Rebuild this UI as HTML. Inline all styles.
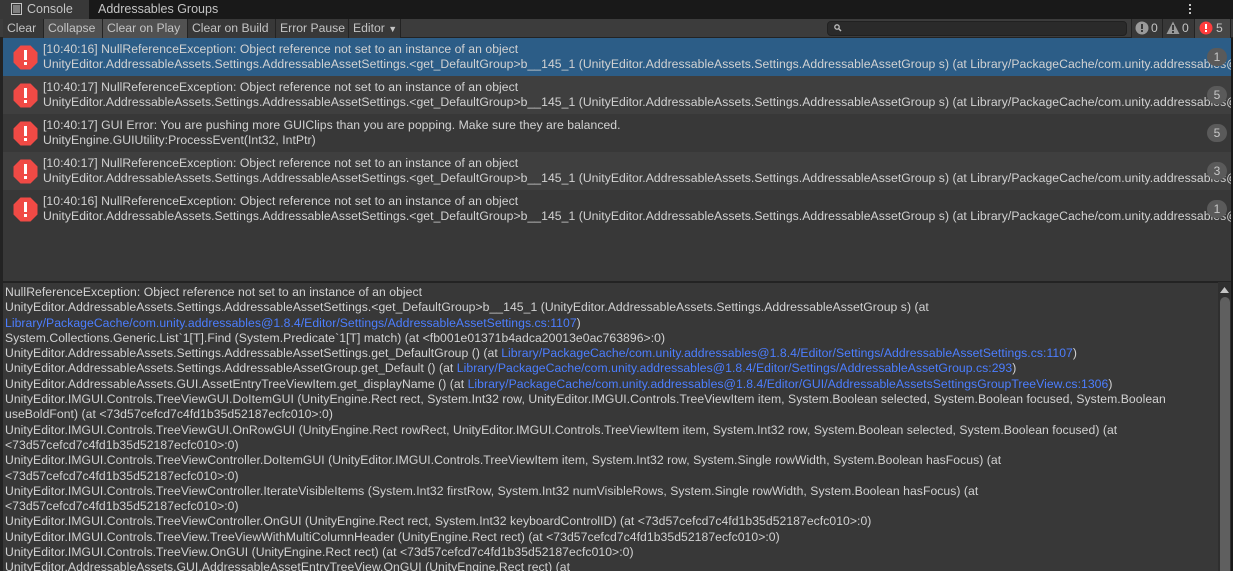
<!DOCTYPE html>
<html><head><style>
*{margin:0;padding:0;box-sizing:border-box}
body{width:1233px;height:571px;overflow:hidden;background:#383838;font-family:"Liberation Sans",sans-serif;font-size:12px;color:#d2d2d2;position:relative}
.abs{position:absolute}
#tabs{left:0;top:0;width:1233px;height:19px;background:#191919}
.tab{top:0;height:19px;line-height:19px;font-size:12.5px;color:#c4c4c4;white-space:nowrap}
#tb{left:0;top:19px;width:1233px;height:19px;background:#3c3c3c;border-bottom:1px solid #232323}
.btn{top:0;height:19px;line-height:18px;padding:0 4px;font-size:12.2px;color:#c4c4c4;border-right:1px solid #232323;background:#383838;white-space:nowrap;overflow:hidden}
.on{background:#515151}
.row{left:3px;width:1228px;height:38px;overflow:hidden;white-space:nowrap}
.row .t{position:absolute;left:40px;top:4px;line-height:15px;font-size:12.2px;letter-spacing:0.05px;color:#d2d2d2}
.row svg{position:absolute;left:10px;top:7px}
.badge{position:absolute;left:1204px;top:10px;width:20px;height:18px;border-radius:9px;background:#5a5a5a;color:#c8c8c8;text-align:center;line-height:18px;font-size:12px}
#det{left:3px;top:282px;width:1215px;height:289px;overflow:hidden;border-top:1px solid #232323}
#det div{white-space:nowrap;line-height:15.3px;font-size:12.2px;letter-spacing:0.05px;color:#d2d2d2}
#det .in{padding:2px 0 0 2px}
a{color:#4c7eff;text-decoration:none}
</style></head><body>
<div class="abs" style="left:0;top:0;width:3px;height:571px;background:#232323"></div>
<div class="abs" style="left:1231px;top:19px;width:2px;height:552px;background:#191919"></div>
<div id="tabs" class="abs">
 <div class="abs" style="left:0;top:0;width:89px;height:19px;background:#383838"></div>
 <svg class="abs" style="left:11px;top:3px" width="11" height="12" viewBox="0 0 11 12"><rect x="0.5" y="0.5" width="10" height="11" fill="none" stroke="#c4c4c4"/><path d="M2 3h7M2 5h7M2 7h7M2 9h7" stroke="#c4c4c4"/></svg>
 <div class="abs tab" style="left:27px">Console</div>
 <div class="abs tab" style="left:98px">Addressables Groups</div>
 <div class="abs" style="left:1189px;top:4px;width:2px;height:2px;background:#c4c4c4;box-shadow:0 4px #c4c4c4,0 8px #c4c4c4"></div>
</div>
<div id="tb" class="abs">
 <div class="abs btn" style="left:3px;width:41px">Clear</div>
 <div class="abs btn on" style="left:44px;width:59px">Collapse</div>
 <div class="abs btn on" style="left:103px;width:85px">Clear on Play</div>
 <div class="abs btn" style="left:188px;width:88px">Clear on Build</div>
 <div class="abs btn" style="left:276px;width:73px">Error Pause</div>
 <div class="abs btn" style="left:349px;width:52px">Editor <span style="font-size:9px">▼</span></div>
 <div class="abs" style="left:827px;top:2px;width:300px;height:15px;background:#2a2a2a;border:1px solid #212121;border-radius:4px"></div>
 <svg class="abs" style="left:834px;top:5px" width="8" height="8"><circle cx="3" cy="3" r="2.2" fill="none" stroke="#bbb" stroke-width="1.3"/><path d="M4.5 4.5L7 7" stroke="#bbb" stroke-width="1.5"/></svg>
 <div class="abs btn" style="left:1131px;width:32px;border-left:1px solid #232323"><svg width="14" height="14" style="position:absolute;left:3px;top:2px"><circle cx="7" cy="7" r="6.5" fill="#9a9a9a"/><rect x="6" y="3" width="2" height="5" fill="#383838"/><rect x="6" y="9" width="2" height="2" fill="#383838"/></svg><span style="position:absolute;left:19px">0</span></div>
 <div class="abs btn" style="left:1163px;width:32px"><svg width="14" height="14" style="position:absolute;left:3px;top:2px"><path d="M7 0.5L13.5 13H0.5Z" fill="#9a9a9a"/><rect x="6" y="4" width="2" height="5" fill="#383838"/><rect x="6" y="10" width="2" height="2" fill="#383838"/></svg><span style="position:absolute;left:19px">0</span></div>
 <div class="abs btn on" style="left:1195px;width:36px;background:#464646"><svg width="14" height="14" style="position:absolute;left:4px;top:2px"><circle cx="7" cy="7" r="6.5" fill="#ff3c3c"/><rect x="6" y="3" width="2" height="5" fill="#fff"/><rect x="6" y="9" width="2" height="2" fill="#fff"/></svg><span style="position:absolute;left:21px">5</span></div>
</div>

<div class="abs row" style="top:38px;background:#2c5d87"><svg width="25" height="25" viewBox="0 0 25 25"><path d="M7.5 0.5h10l7 7v10l-7 7h-10l-7-7v-10z" fill="#f04a45"/><rect x="11" y="5" width="3" height="10" fill="#fff"/><rect x="11" y="17" width="3" height="3" fill="#fff"/></svg><div class="t">[10:40:16] NullReferenceException: Object reference not set to an instance of an object<br>UnityEditor.AddressableAssets.Settings.AddressableAssetSettings.&lt;get_DefaultGroup&gt;b__145_1 (UnityEditor.AddressableAssets.Settings.AddressableAssetGroup s) (at Library/PackageCache/com.unity.addressables@1.8.4</div><div class="badge">1</div></div>
<div class="abs row" style="top:76px;background:#3f3f3f"><svg width="25" height="25" viewBox="0 0 25 25"><path d="M7.5 0.5h10l7 7v10l-7 7h-10l-7-7v-10z" fill="#f04a45"/><rect x="11" y="5" width="3" height="10" fill="#fff"/><rect x="11" y="17" width="3" height="3" fill="#fff"/></svg><div class="t">[10:40:17] NullReferenceException: Object reference not set to an instance of an object<br>UnityEditor.AddressableAssets.Settings.AddressableAssetSettings.&lt;get_DefaultGroup&gt;b__145_1 (UnityEditor.AddressableAssets.Settings.AddressableAssetGroup s) (at Library/PackageCache/com.unity.addressables@1.8.4</div><div class="badge">5</div></div>
<div class="abs row" style="top:114px;background:#383838"><svg width="25" height="25" viewBox="0 0 25 25"><path d="M7.5 0.5h10l7 7v10l-7 7h-10l-7-7v-10z" fill="#f04a45"/><rect x="11" y="5" width="3" height="10" fill="#fff"/><rect x="11" y="17" width="3" height="3" fill="#fff"/></svg><div class="t">[10:40:17] GUI Error: You are pushing more GUIClips than you are popping. Make sure they are balanced.<br>UnityEngine.GUIUtility:ProcessEvent(Int32, IntPtr)</div><div class="badge">5</div></div>
<div class="abs row" style="top:152px;background:#3f3f3f"><svg width="25" height="25" viewBox="0 0 25 25"><path d="M7.5 0.5h10l7 7v10l-7 7h-10l-7-7v-10z" fill="#f04a45"/><rect x="11" y="5" width="3" height="10" fill="#fff"/><rect x="11" y="17" width="3" height="3" fill="#fff"/></svg><div class="t">[10:40:17] NullReferenceException: Object reference not set to an instance of an object<br>UnityEditor.AddressableAssets.Settings.AddressableAssetSettings.&lt;get_DefaultGroup&gt;b__145_1 (UnityEditor.AddressableAssets.Settings.AddressableAssetGroup s) (at Library/PackageCache/com.unity.addressables@1.8.4</div><div class="badge">3</div></div>
<div class="abs row" style="top:190px;background:#383838"><svg width="25" height="25" viewBox="0 0 25 25"><path d="M7.5 0.5h10l7 7v10l-7 7h-10l-7-7v-10z" fill="#f04a45"/><rect x="11" y="5" width="3" height="10" fill="#fff"/><rect x="11" y="17" width="3" height="3" fill="#fff"/></svg><div class="t">[10:40:16] NullReferenceException: Object reference not set to an instance of an object<br>UnityEditor.AddressableAssets.Settings.AddressableAssetSettings.&lt;get_DefaultGroup&gt;b__145_1 (UnityEditor.AddressableAssets.Settings.AddressableAssetGroup s) (at Library/PackageCache/com.unity.addressables@1.8.4</div><div class="badge">1</div></div>

<div class="abs" style="left:3px;top:281px;width:1228px;height:1px;background:#232323"></div>
<div id="det" class="abs"><div class="in">
<div>NullReferenceException: Object reference not set to an instance of an object</div>
<div>UnityEditor.AddressableAssets.Settings.AddressableAssetSettings.&lt;get_DefaultGroup&gt;b__145_1 (UnityEditor.AddressableAssets.Settings.AddressableAssetGroup s) (at</div>
<div><a>Library/PackageCache/com.unity.addressables@1.8.4/Editor/Settings/AddressableAssetSettings.cs:1107</a>)</div>
<div>System.Collections.Generic.List`1[T].Find (System.Predicate`1[T] match) (at &lt;fb001e01371b4adca20013e0ac763896&gt;:0)</div>
<div>UnityEditor.AddressableAssets.Settings.AddressableAssetSettings.get_DefaultGroup () (at <a>Library/PackageCache/com.unity.addressables@1.8.4/Editor/Settings/AddressableAssetSettings.cs:1107</a>)</div>
<div>UnityEditor.AddressableAssets.Settings.AddressableAssetGroup.get_Default () (at <a>Library/PackageCache/com.unity.addressables@1.8.4/Editor/Settings/AddressableAssetGroup.cs:293</a>)</div>
<div>UnityEditor.AddressableAssets.GUI.AssetEntryTreeViewItem.get_displayName () (at <a>Library/PackageCache/com.unity.addressables@1.8.4/Editor/GUI/AddressableAssetsSettingsGroupTreeView.cs:1306</a>)</div>
<div>UnityEditor.IMGUI.Controls.TreeViewGUI.DoItemGUI (UnityEngine.Rect rect, System.Int32 row, UnityEditor.IMGUI.Controls.TreeViewItem item, System.Boolean selected, System.Boolean focused, System.Boolean</div>
<div>useBoldFont) (at &lt;73d57cefcd7c4fd1b35d52187ecfc010&gt;:0)</div>
<div>UnityEditor.IMGUI.Controls.TreeViewGUI.OnRowGUI (UnityEngine.Rect rowRect, UnityEditor.IMGUI.Controls.TreeViewItem item, System.Int32 row, System.Boolean selected, System.Boolean focused) (at</div>
<div>&lt;73d57cefcd7c4fd1b35d52187ecfc010&gt;:0)</div>
<div>UnityEditor.IMGUI.Controls.TreeViewController.DoItemGUI (UnityEditor.IMGUI.Controls.TreeViewItem item, System.Int32 row, System.Single rowWidth, System.Boolean hasFocus) (at</div>
<div>&lt;73d57cefcd7c4fd1b35d52187ecfc010&gt;:0)</div>
<div>UnityEditor.IMGUI.Controls.TreeViewController.IterateVisibleItems (System.Int32 firstRow, System.Int32 numVisibleRows, System.Single rowWidth, System.Boolean hasFocus) (at</div>
<div>&lt;73d57cefcd7c4fd1b35d52187ecfc010&gt;:0)</div>
<div>UnityEditor.IMGUI.Controls.TreeViewController.OnGUI (UnityEngine.Rect rect, System.Int32 keyboardControlID) (at &lt;73d57cefcd7c4fd1b35d52187ecfc010&gt;:0)</div>
<div>UnityEditor.IMGUI.Controls.TreeView.TreeViewWithMultiColumnHeader (UnityEngine.Rect rect) (at &lt;73d57cefcd7c4fd1b35d52187ecfc010&gt;:0)</div>
<div>UnityEditor.IMGUI.Controls.TreeView.OnGUI (UnityEngine.Rect rect) (at &lt;73d57cefcd7c4fd1b35d52187ecfc010&gt;:0)</div>
<div>UnityEditor.AddressableAssets.GUI.AddressableAssetEntryTreeView.OnGUI (UnityEngine.Rect rect) (at</div>
</div></div>
<div class="abs" style="left:1218px;top:282px;width:13px;height:289px;background:#2f2f2f"></div>
<svg class="abs" style="left:1220px;top:287px" width="9" height="6"><path d="M4.5 0L9 6H0Z" fill="#c4c4c4"/></svg>
<div class="abs" style="left:1220px;top:297px;width:10px;height:274px;background:#5f5f5f;border-radius:5px 5px 0 0"></div>
</body></html>
